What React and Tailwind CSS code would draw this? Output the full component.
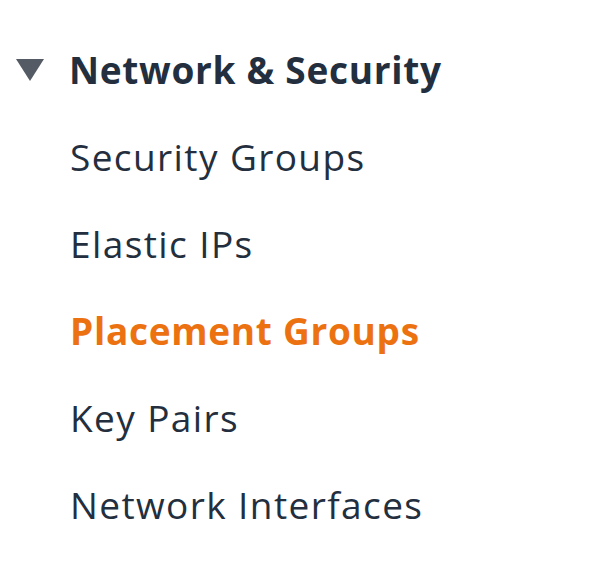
import { useState } from 'react';

const ITEMS = [
  'Security Groups',
  'Elastic IPs',
  'Placement Groups',
  'Key Pairs',
  'Network Interfaces',
];

export default function App() {
  const [active, setActive] = useState('Placement Groups');

  return (
    <div className="w-[600px] h-[579px] bg-white overflow-hidden" style={{ fontFamily: '"Open Sans", "Noto Sans", sans-serif' }}>
      <div className="pt-[44px] pl-[15px]">
        {/* Section header */}
        <div className="flex items-center gap-[24px] h-[50px]">
          <svg width="30" height="24" viewBox="0 0 30 24" className="shrink-0 mt-[2px]">
            <path d="M1 1 H29 L15 23 Z" fill="#545b64" />
          </svg>
          <span className="text-[37px] font-bold text-[#232f3e] leading-none tracking-[0.7px]">Network &amp; Security</span>
        </div>

        {/* Links */}
        <ul className="pl-[55px] mt-[37px] flex flex-col gap-[37px]">
          {ITEMS.map((label) => (
            <li key={label} className="h-[50px] flex items-center">
              <button
                onClick={() => setActive(label)}
                className={
                  label === active
                    ? 'text-[37px] leading-none font-bold tracking-[0.7px] text-[#ec7211]'
                    : 'text-[37px] leading-none tracking-[1.4px] text-[#232f3e]'
                }
              >
                {label}
              </button>
            </li>
          ))}
        </ul>
      </div>
    </div>
  );
}
